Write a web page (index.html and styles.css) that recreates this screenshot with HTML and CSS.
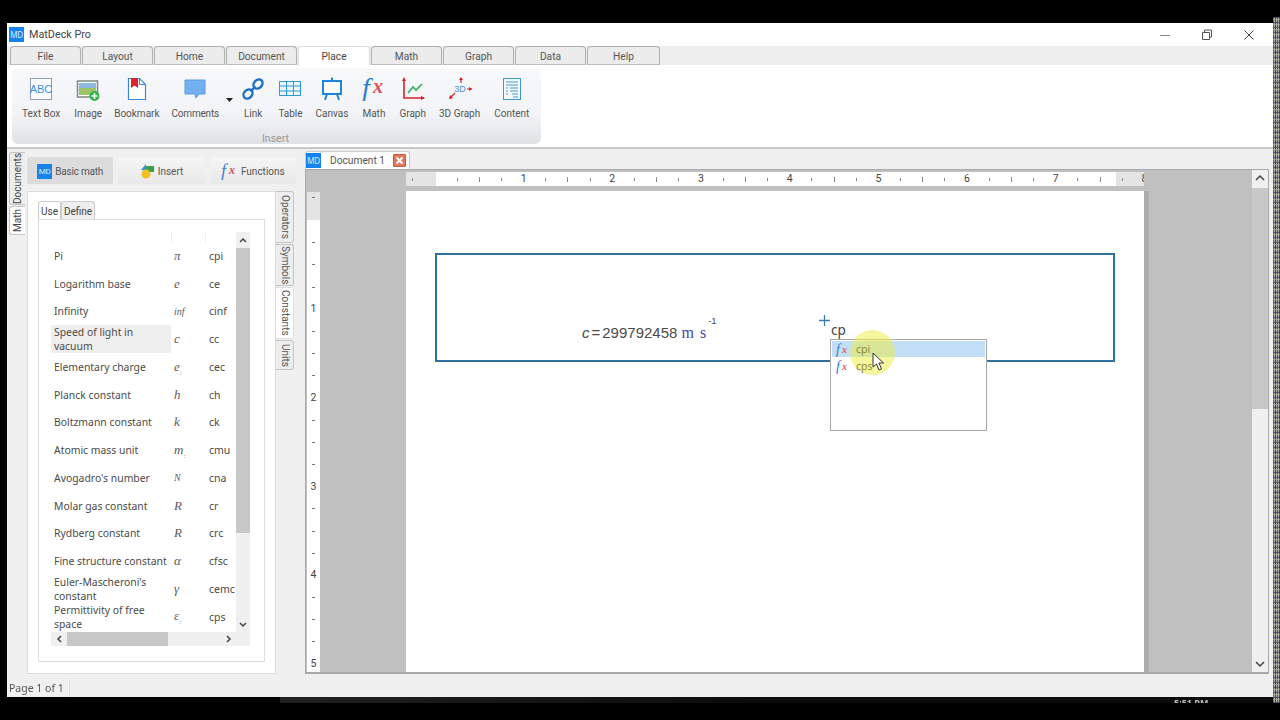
FILE: index.html
```html
<!DOCTYPE html>
<html lang="en">
<head>
<meta charset="utf-8">
<title>MatDeck Pro</title>
<link rel="stylesheet" href="styles.css">
</head>
<body>
<div class="stage">
  <div class="desk">
    <div class="window">
      <header class="titlebar">
        <span class="logo">MD</span>
        <span class="apptitle">MatDeck Pro</span>
        <div class="winbtns">
          <svg width="12" height="12" viewBox="0 0 12 12"><path d="M1 6.500h10" stroke="#888" fill="none"/></svg>
          <svg width="12" height="12" viewBox="0 0 12 12"><path d="M3.500 3V1h7v7H8.500M1.500 3.500h7v7h-7z" stroke="#555" fill="none"/></svg>
          <svg width="12" height="12" viewBox="0 0 12 12"><path d="M1.500 1.500l9 9M10.500 1.500l-9 9" stroke="#444" fill="none"/></svg>
        </div>
      </header>
      <nav class="menutabs">
        <span class="mtab">File</span>
        <span class="mtab">Layout</span>
        <span class="mtab">Home</span>
        <span class="mtab">Document</span>
        <span class="mtab active">Place</span>
        <span class="mtab">Math</span>
        <span class="mtab">Graph</span>
        <span class="mtab">Data</span>
        <span class="mtab">Help</span>
      </nav>
      <section class="ribbonwrap">
        <div class="ribbon">
          <div class="tools">
            <div class="tool"><svg class="ic" viewBox="0 0 24 24"><rect x="1.500" y="1.500" width="21" height="21" fill="#fbfcff" stroke="#8fa0b4"/><text x="12" y="16" class="abc">ABC</text></svg><span>Text Box</span></div>
            <div class="tool"><svg class="ic" viewBox="0 0 24 24"><rect x="1.500" y="4" width="20" height="16" fill="#fff" stroke="#7b8a80" stroke-width="1.500"/><rect x="3" y="6" width="17" height="6" fill="#8fb8e0"/><rect x="3" y="11" width="17" height="7" fill="#9cc56a"/><circle cx="18.500" cy="19" r="5" fill="#34b34a"/><path d="M18.500 16v6M15.500 19h6" stroke="#fff" stroke-width="1.500"/></svg><span>Image</span></div>
            <div class="tool"><svg class="ic" viewBox="0 0 24 24"><path d="M3.500 1.500h11l6 6v15h-17z" fill="#fff" stroke="#3f88d0" stroke-width="1.200"/><path d="M14.500 1.500v6h6" fill="none" stroke="#3f88d0"/><path d="M6 1h7v10l-3.500-2.500L6 11z" fill="#e0202c"/></svg><span>Bookmark</span></div>
            <div class="tool"><svg class="ic" viewBox="0 0 24 24"><path d="M2 3h20v14h-6l-3 4-1-4H2z" fill="#72b0f2" stroke="#5a9ae0"/></svg><span>Comments</span></div>
            <div class="tool"><svg class="ic" viewBox="0 0 24 24"><g fill="none" stroke="#1a70c8" stroke-width="2.400"><ellipse cx="17" cy="7" rx="5" ry="4" transform="rotate(-45 17 7)"/><ellipse cx="7" cy="17" rx="5" ry="4" transform="rotate(-45 7 17)"/><path d="M9.500 14.500l5-5"/></g></svg><span>Link</span></div>
            <div class="tool"><svg class="ic" viewBox="0 0 24 24"><path d="M1.500 4.500h21v14h-21zM1.500 9h21M1.500 14h21M8.500 4.500v14M15.500 4.500v14" fill="#eaf5fc" stroke="#2d9ad6"/></svg><span>Table</span></div>
            <div class="tool"><svg class="ic" viewBox="0 0 24 24"><path d="M12 .5v3M3 4h18v13H3zM7 17l-2 6M17 17l2 6" fill="#fff" stroke="#1d86dc" stroke-width="2"/></svg><span>Canvas</span></div>
            <div class="tool"><svg class="ic" viewBox="0 0 24 24"><text x="0" y="20" class="fxf">f</text><text x="11" y="16" class="fxx">x</text></svg><span>Math</span></div>
            <div class="tool"><svg class="ic" viewBox="0 0 24 24"><path d="M3 2v19h20" fill="none" stroke="#d8202c" stroke-width="1.600"/><path d="M3 0L1 4h4zM24 21l-4-2v4z" fill="#d8202c"/><path d="M7 16l5-6 3 3 6-6" fill="none" stroke="#30b060" stroke-width="1.600"/></svg><span>Graph</span></div>
            <div class="tool"><svg class="ic" viewBox="0 0 24 24"><text x="12" y="15" class="d3">3D</text><path d="M13 6V1M19 12h5M7 16l-5 5" stroke="#d8202c" stroke-width="1.200"/><path d="M13 0l-2 3h4zM24 12l-3-2v4zM1 22l1-4 3 3z" fill="#d8202c"/></svg><span>3D Graph</span></div>
            <div class="tool"><svg class="ic" viewBox="0 0 24 24"><rect x="3.500" y="1.500" width="17" height="21" fill="#f4fafe" stroke="#3a9ad8"/><path d="M6 5h12M6 8h12M6 11h2M10 11h8M6 14h2M10 14h8M6 17h2M12 17h6M13 20h5" stroke="#4a98c8"/></svg><span>Content</span></div>
          </div>
          <svg class="droparrow" width="7" height="4" viewBox="0 0 7 4"><path d="M0 0h7L3.500 4z" fill="#222"/></svg>
          <div class="ribbonlabel">Insert</div>
        </div>
      </section>
      <main class="main">
        <div class="vtabs-left">
          <span class="vl">Documents</span>
          <span class="vl on">Math</span>
        </div>
        <div class="panel">
          <div class="pbtns">
            <span class="pbtn on"><span class="logo">MD</span>Basic math</span>
            <span class="pbtn"><svg width="15" height="15" viewBox="0 0 15 15"><path d="M6 0L1 6h5z" fill="#3a8ee0"/><path d="M6 2h8v6H6z" fill="#3aa050"/><circle cx="6" cy="10" r="4.500" fill="#f0c020"/></svg>Insert</span>
            <span class="pbtn"><svg width="17" height="17" viewBox="0 0 17 17"><text x="0" y="14" class="pf">f</text><text x="8" y="11" class="px">x</text></svg>Functions</span>
          </div>
          <div class="panelbody">
            <div class="box">
              <div class="subtabs"><span class="st on">Use</span><span class="st">Define</span></div>
              <div class="subpanel">
                <div class="scrollview">
                  <div class="list">
                    <div class="listhead"><i></i><i></i></div>
                    <div class="r"><span class="n">Pi</span><span class="s">π</span><span class="c">cpi</span></div>
                    <div class="r"><span class="n">Logarithm base</span><span class="s">e</span><span class="c">ce</span></div>
                    <div class="r"><span class="n">Infinity</span><span class="s tiny">inf</span><span class="c">cinf</span></div>
                    <div class="r sel"><span class="n">Speed of light in vacuum</span><span class="s">c</span><span class="c">cc</span></div>
                    <div class="r"><span class="n">Elementary charge</span><span class="s">e<sub>:</sub></span><span class="c">cec</span></div>
                    <div class="r"><span class="n">Planck constant</span><span class="s">h</span><span class="c">ch</span></div>
                    <div class="r"><span class="n">Boltzmann constant</span><span class="s">k</span><span class="c">ck</span></div>
                    <div class="r"><span class="n">Atomic mass unit</span><span class="s">m<sub>:</sub></span><span class="c">cmu</span></div>
                    <div class="r"><span class="n">Avogadro's number</span><span class="s tiny">N</span><span class="c">cna</span></div>
                    <div class="r"><span class="n">Molar gas constant</span><span class="s">R</span><span class="c">cr</span></div>
                    <div class="r"><span class="n">Rydberg constant</span><span class="s">R</span><span class="c">crc</span></div>
                    <div class="r"><span class="n">Fine structure constant</span><span class="s">α</span><span class="c">cfsc</span></div>
                    <div class="r"><span class="n">Euler-Mascheroni's constant</span><span class="s">γ</span><span class="c">cemc</span></div>
                    <div class="r"><span class="n">Permittivity of free space</span><span class="s">ε<sub>:</sub></span><span class="c">cps</span></div>
                  </div>
                  <div class="vbar">
                    <svg width="14" height="16" viewBox="0 0 14 16"><path d="M4 10l3-3 3 3" fill="none" stroke="#444" stroke-width="1.500"/></svg>
                    <div class="vthumb"></div>
                    <svg class="barend" width="14" height="16" viewBox="0 0 14 16"><path d="M4 7l3 3 3-3" fill="none" stroke="#444" stroke-width="1.500"/></svg>
                  </div>
                  <div class="hbar">
                    <svg width="16" height="14" viewBox="0 0 16 14"><path d="M10 4L7 7l3 3" fill="none" stroke="#444" stroke-width="1.500"/></svg>
                    <div class="hthumb"></div>
                    <svg class="hend-arrow" width="16" height="14" viewBox="0 0 16 14"><path d="M7 4l3 3-3 3" fill="none" stroke="#444" stroke-width="1.500"/></svg>
                  </div>
                  <div class="corner"></div>
                </div>
              </div>
            </div>
            <div class="vtabs-right">
              <span class="vr">Operators</span>
              <span class="vr">Symbols</span>
              <span class="vr on">Constants</span>
              <span class="vr">Units</span>
            </div>
          </div>
        </div>
        <div class="doc">
          <div class="doctabs">
            <div class="doctab"><span class="logo">MD</span><span class="dname">Document 1</span><span class="xbtn"><svg width="9" height="9" viewBox="0 0 9 9"><path d="M1.500 1.500l6 6M7.500 1.500l-6 6" stroke="#fff" stroke-width="2"/></svg></span></div>
          </div>
          <div class="docview">
            <div class="canvas">
              <div class="vruler">
                <div class="vmargin"><u></u></div>
                <div class="vu"><u></u><u></u><u></u><b>1</b></div>
                <div class="vu"><u></u><u></u><u></u><b>2</b></div>
                <div class="vu"><u></u><u></u><u></u><b>3</b></div>
                <div class="vu"><u></u><u></u><u></u><b>4</b></div>
                <div class="vu"><u></u><u></u><u></u><b>5</b></div>
              </div>
              <div class="pagecol">
                <div class="hruler">
                  <div class="hmargin"><u></u></div>
                  <div class="hu"><u></u><u class="long"></u><u></u><b>1</b></div>
                  <div class="hu"><u></u><u class="long"></u><u></u><b>2</b></div>
                  <div class="hu"><u></u><u class="long"></u><u></u><b>3</b></div>
                  <div class="hu"><u></u><u class="long"></u><u></u><b>4</b></div>
                  <div class="hu"><u></u><u class="long"></u><u></u><b>5</b></div>
                  <div class="hu"><u></u><u class="long"></u><u></u><b>6</b></div>
                  <div class="hu"><u></u><u class="long"></u><u></u><b>7</b></div>
                  <div class="hu"><u></u><u class="long"></u><u></u><b>8</b></div>
                </div>
                <div class="page">
                  <div class="textbox">
                    <div class="formula"><i>c</i><span class="eq">=</span>299792458 <span class="unit">m s</span><sup>-1</sup></div>
                  </div>
                  <svg class="plus" width="13" height="13" viewBox="0 0 13 13"><path d="M6.500 1v11M1 6.500h11" stroke="#3c7ea8" stroke-width="1.300"/></svg>
                  <div class="typed">cp</div>
                  <div class="popup">
                    <div class="pi on"><svg width="16" height="15" viewBox="0 0 16 15"><text x="1" y="12" class="mf">f</text><text x="7" y="11" class="mx">x</text></svg><span>cpi</span></div>
                    <div class="pi"><svg width="16" height="15" viewBox="0 0 16 15"><text x="1" y="12" class="mf">f</text><text x="7" y="11" class="mx">x</text></svg><span>cps</span></div>
                  </div>
                  <div class="spot"></div>
                  <svg class="cursor" width="13" height="19" viewBox="0 0 13 19"><path d="M1 1v14l3.500-3 2.500 6 2.500-1-2.500-6h4.500z" fill="#fff" stroke="#333"/></svg>
                </div>
              </div>
            </div>
            <div class="docbar">
              <svg width="16" height="16" viewBox="0 0 16 16"><path d="M4 10l4-4 4 4" fill="none" stroke="#444" stroke-width="1.500"/></svg>
              <div class="docthumb"></div>
              <svg class="barend" width="16" height="16" viewBox="0 0 16 16"><path d="M4 6l4 4 4-4" fill="none" stroke="#444" stroke-width="1.500"/></svg>
            </div>
          </div>
        </div>
      </main>
      <footer class="status"><span>Page 1 of 1</span></footer>
    </div>
    <div class="taskbar"><span class="grayband"></span><span class="clock">5:51 PM</span></div>
  </div>
  <div class="noise"></div>
</div>
</body>
</html>
```

FILE: styles.css
```css
* { box-sizing: border-box; }
html, body { margin: 0; padding: 0; }
body {
  width: 1280px; height: 720px; overflow: hidden; background: #000;
  font-family: "Noto Sans", "Open Sans", sans-serif; font-size: 11px; color: #444;
}
.stage { display: flex; height: 686px; margin-top: 17px; filter: blur(.35px); }
.desk { width: 1273px; padding-top: 6px; display: flex; flex-direction: column; }
.noise {
  width: 7px; height: 686px;
  background:
    repeating-linear-gradient(0deg, rgba(40,50,80,.55) 0 1px, transparent 1px 3px, rgba(190,190,150,.5) 3px 4px, transparent 4px 5px),
    repeating-linear-gradient(90deg, #5c6070 0 1px, #a8aab0 1px 2px, #3e4658 2px 3px, #b0ab98 3px 4px);
}
.window {
  margin-left: 7px; width: 1266px; height: 674px; background: #f0f0f0;
  display: flex; flex-direction: column;
}
.taskbar { height: 6px; background: linear-gradient(90deg, #2c2c2c, #0c0c0c 60%); display: flex; overflow: hidden; }
.grayband { width: 280px; flex: none; background: #000; }
.clock { margin-left: 894px; color: #bbb; font-size: 9px; line-height: 12px; height: 6px; font-weight: 700; }

.logo {
  display: inline-flex; align-items: center; justify-content: center; flex: none;
  width: 15px; height: 15px; background: #1583ee; color: #dcecff; font-size: 8px; letter-spacing: -.2px;
}
.titlebar { height: 23px; background: #fff; display: flex; align-items: center; padding-left: 2px; }
.apptitle { margin-left: 5px; color: #444; font: 10.800px Roboto, sans-serif; }
.winbtns { margin-left: auto; margin-right: 18px; display: flex; gap: 30px; }

.menutabs { height: 19px; background: #eee; display: flex; padding-left: 3px; gap: 1px; position: relative; z-index: 1; }
.mtab {
  width: 71px; height: 19px; border: 1px solid #b0b0b0; border-bottom-color: #bcbcbc; border-radius: 4px 4px 0 0;
  background: #ececec; text-align: center; font: 10.200px/19px Roboto, sans-serif; color: #555;
}
.mtab.active { width: 72px; background: #fff; height: 20px; border-color: #ddd; border-bottom: 0; color: #444; }
.mtab:last-child { width: 73px; }

.ribbonwrap { height: 84px; flex: none; background: #fff; border-bottom: 2px solid #c8c8c8; padding: 3px 0 0 5px; }
.ribbon {
  position: relative; width: 529px; height: 76px; border-radius: 6px;
  background: linear-gradient(#f7f8fa 0, #f3f4f7 60%, #dfe1e5 100%);
}
.tools { display: flex; gap: 13px; padding: 9px 0 0 10px; }
.tool { display: flex; flex-direction: column; align-items: center; gap: 5px; font: 10px/14px Roboto, sans-serif; color: #555; white-space: nowrap; }
.tool span { line-height: 14px; }
.tool:nth-child(2) { margin-left: 1px; }
.tool:nth-child(3) { margin-left: -1px; }
.tool:nth-child(4) { margin-left: -1px; letter-spacing: -.2px; }
.tool:nth-child(5) { margin-left: 12px; }
.tool:nth-child(6) { margin-left: 3px; }
.tool:nth-child(8), .tool:nth-child(9), .tool:nth-child(11) { margin-left: 1px; }
.ic { width: 24px; height: 24px; display: block; margin: 0 -8px 1px; flex: none; }
.droparrow { position: absolute; left: 214px; top: 30px; }
.ribbonlabel { position: absolute; left: 250px; top: 64px; color: #999; font: 10.500px/14px Roboto, sans-serif; }
.abc { font: 11px "Liberation Sans", sans-serif; fill: #3f8fe0; text-anchor: middle; }
.fxf { font: italic 28px "Liberation Serif", serif; fill: #2a7fd0; }
.fxx { font: italic 700 20px "Liberation Serif", serif; fill: #e0505a; }
.d3 { font: 9px "Liberation Sans", sans-serif; fill: #4a90d8; text-anchor: middle; }
.pf { font: italic 18px "Liberation Serif", serif; fill: #3a86d0; }
.px { font: italic 700 12px "Liberation Serif", serif; fill: #e0505a; }
.mf { font: italic 14px "Liberation Serif", serif; fill: #3a7ad0; }
.mx { font: italic 700 10px "Liberation Serif", serif; fill: #d85a6a; }

.main { flex: 1; display: flex; min-height: 0; padding-top: 1px; }
.vtabs-left { width: 19px; flex: none; display: flex; flex-direction: column; padding: 2px 0 0 2px; gap: 1px; }
.vl {
  writing-mode: vertical-rl; transform: rotate(180deg); width: 16px; height: 53px; text-align: center;
  font: 10px/15px Roboto, sans-serif; background: #eee; border: 1px solid #c4c4c4; border-left: 0; border-radius: 0 3px 3px 0;
}
.vl.on { background: #fff; height: 29px; }
.panel { width: 270px; flex: none; display: flex; flex-direction: column; padding: 7px 0 0 1px; }
.pbtns { display: flex; gap: 5px; height: 27px; flex: none; width: 269px; }
.pbtn {
  flex: 1; display: flex; align-items: center; justify-content: center; gap: 3px; padding-top: 1px; font: 10px Roboto, sans-serif; color: #555;
  background: linear-gradient(#f6f6f6, #e8e8e8); border-radius: 2px;
}
.pbtn.on { background: #dcdcdc; letter-spacing: -.2px; }
.panelbody { display: flex; height: 483px; margin-top: 7px; }
.box { width: 249px; flex: none; background: #fff; border: 1px solid #dcdcdc; padding: 9px 10px 11px; display: flex; flex-direction: column; }
.subtabs { display: flex; height: 18px; flex: none; }
.st { height: 18px; width: 34px; text-align: center; font: 10px/19px Roboto, sans-serif; border: 1px solid #ccc; border-bottom: 0; border-radius: 3px 3px 0 0; background: #eee; }
.st.on { background: #fff; width: 23px; }
.subpanel { flex: 1; border: 1px solid #dedede; padding: 12px 13px 14px 12px; min-height: 0; }
.scrollview { display: grid; grid-template-columns: 185px 14px; grid-template-rows: 400px 14px; height: 414px; }
.list { overflow: hidden; }
.listhead { height: 10px; position: relative; }
.listhead i { position: absolute; top: 0; width: 1px; height: 10px; background: #eee; }
.listhead i:first-child { left: 120px; }
.listhead i:last-child { left: 154px; }
.r { display: grid; grid-template-columns: 120px 34px 31px; height: 27.750px; align-items: center; }
.n { padding: 0 0 0 3px; line-height: 14px; font-size: 10.400px; color: #4a4a4a; }
.sel .n { background: #efefef; height: 27.750px; display: flex; align-items: center; }
.s { padding-left: 3px; font: italic 13px "Liberation Serif", serif; color: #5c5c5c; }
.s sub { font-size: 6px; }
.s.tiny { font-size: 10px; }
.c { padding-left: 4px; font-size: 10.500px; color: #4a4a4a; white-space: nowrap; }
.vbar { background: #f0f0f0; display: flex; flex-direction: column; }
.vthumb { height: 285px; background: #c8c8c8; }
.barend { margin-top: auto; }
.hbar { background: #f0f0f0; display: flex; }
.hthumb { width: 101px; background: #c8c8c8; }
.hend-arrow { margin-left: 52px; }
.corner { background: #f0f0f0; }
.vtabs-right { display: flex; flex-direction: column; width: 19px; gap: 1px; }
.vr {
  writing-mode: vertical-rl; width: 18px; height: 52px; text-align: center; font: 10px/16px Roboto, sans-serif;
  background: #eee; border: 1px solid #c4c4c4; border-left: 0; border-radius: 0 3px 3px 0; color: #555;
}
.vr:nth-child(2) { height: 42px; }
.vr:nth-child(4) { height: 30px; }
.vr.on { background: #fff; border-color: #e0e0e0; }

.doc { flex: none; width: 964px; margin-left: 9px; padding-top: 1px; display: flex; flex-direction: column; }
.doctabs { height: 18px; flex: none; display: flex; }
.doctab { width: 105px; height: 18px; background: #fff; border: 1px solid #ccc; border-bottom: 0; border-radius: 3px 3px 0 0; display: flex; align-items: center; }
.dname { margin-left: 9px; font: 10.200px Roboto, sans-serif; color: #555; }
.xbtn { margin-left: auto; margin-right: 3px; width: 13px; height: 13px; background: #e0775c; border: 1px solid #c85a40; display: flex; align-items: center; justify-content: center; border-radius: 1px; }
.docview { height: 505px; border: 1px solid #a8a8a8; border-bottom-width: 2px; display: flex; background: #c0c0c0; }
.canvas { flex: 1; display: flex; min-width: 0; padding-left: 1px; overflow: hidden; }
.vruler { width: 13px; flex: none; margin-top: 22px; background: linear-gradient(#e4e4e4 28px, #fff 28px); display: flex; flex-direction: column; overflow: hidden; }
.vruler u { display: block; width: 3px; height: 1px; background: #777; }
.vmargin { height: 39.700px; flex: none; padding: 5px 0 0 5px; }
.vu { height: 88.700px; flex: none; display: grid; grid-template-rows: repeat(4, 1fr); justify-items: center; align-items: center; }
.vu b, .hu b { font: 400 10.500px/12px Roboto, sans-serif; color: #444; }
.pagecol { width: 738px; margin-left: 86px; flex: none; display: flex; flex-direction: column; padding-top: 2px; }
.hruler { height: 14px; flex: none; background: linear-gradient(90deg, #e4e4e4 30px, #fff 30px 710px, #e4e4e4 710px); display: flex; align-items: center; overflow: hidden; }
.hruler u { display: block; width: 1px; height: 3px; background: #888; }
.hruler u.long { height: 5px; }
.hmargin { width: 40px; height: 14px; flex: none; padding-left: 6px; display: flex; align-items: center; }
.hu { width: 88.700px; flex: none; display: grid; grid-template-columns: repeat(4, 1fr); justify-items: center; align-items: center; }
.page { position: relative; flex: 1; margin-top: 5px; background: #fff; box-shadow: 5px 0 0 #aeaeae; }
.textbox { position: absolute; left: 29px; top: 62px; width: 680px; height: 109px; border: 2px solid #2f7199; }
.formula { position: absolute; left: 145px; top: 68px; font: 15px/20px "Liberation Sans", sans-serif; color: #4a4a4a; white-space: nowrap; }
.eq { margin: 0 2px; }
.unit { font-family: "Liberation Serif", serif; font-size: 16px; color: #4b3fb0; word-spacing: 2px; }
.formula sup { font-size: 9.500px; line-height: 0; position: relative; top: -8px; left: 2px; }
.plus { position: absolute; left: 412px; top: 123px; }
.typed { position: absolute; left: 425px; top: 130px; font-size: 13.500px; line-height: 18px; color: #444; }
.popup { position: absolute; left: 424px; top: 148px; width: 157px; height: 92px; background: #fff; border: 1px solid #a8a8a8; padding: 1px; }
.pi { height: 16px; margin-bottom: 1px; display: flex; align-items: center; gap: 5px; padding-left: 3px; font-size: 10.500px; color: #222; }
.pi.on { background: #c3dff8; }
.spot { position: absolute; left: 444px; top: 139px; width: 45px; height: 45px; border-radius: 50%; background: rgba(238, 238, 60, .5); }
.cursor { position: absolute; left: 466px; top: 161px; }
.docbar { width: 16px; flex: none; background: #f0f0f0; display: flex; flex-direction: column; }
.docthumb { height: 221px; background: #c8c8c8; margin-top: 2px; }

.status { height: 18px; flex: none; margin-top: auto; padding-left: 2px; display: flex; align-items: center; font-size: 10.500px; color: #555; }
.status span { padding-right: 5px; border-right: 1px solid #ddd; line-height: 18px; }
```
